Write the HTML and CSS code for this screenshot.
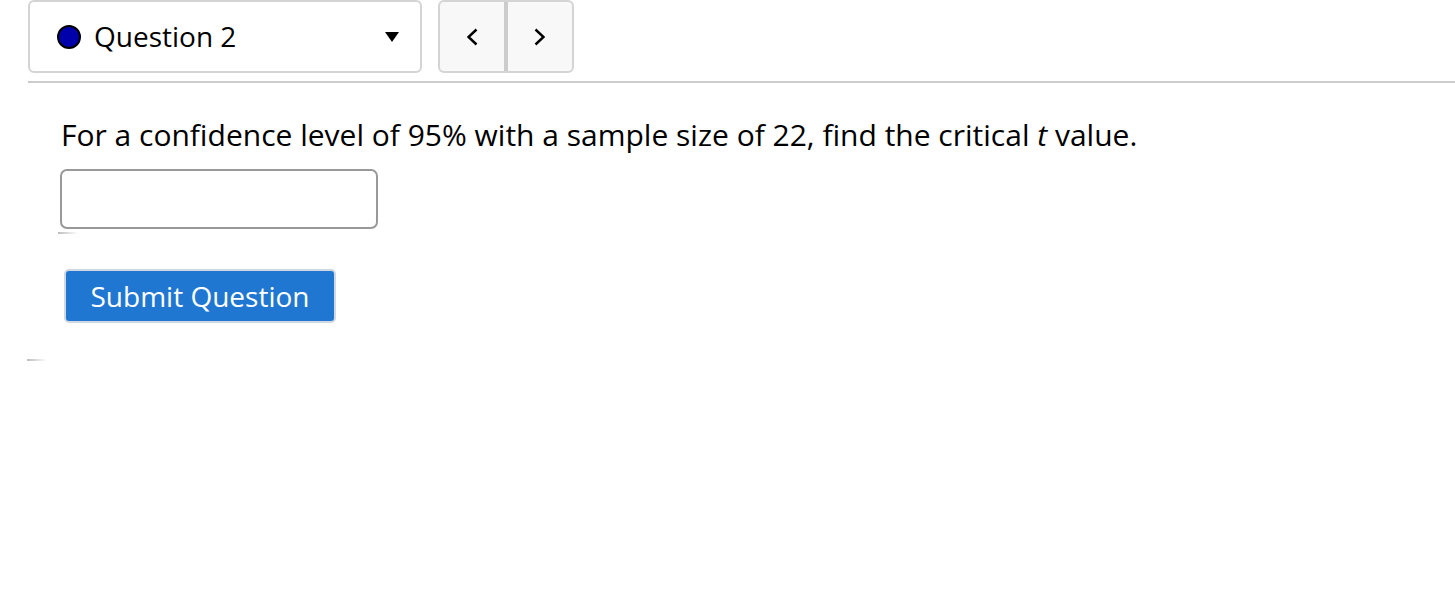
FILE: index.html
```
<!DOCTYPE html>
<html>
  <head>
    <title>Question 2</title>
    <meta charset="UTF-8" />
    <link rel="stylesheet" href="styles.css">
  </head>
  <body>
    <div class="header">
      <div class="picker">
        <span class="dot"></span>
        <span class="picker-label">Question 2</span>
        <span class="caret"></span>
      </div>
      <div class="nav">
        <button class="nav-btn" type="button" aria-label="Previous">
          <svg width="12" height="18" viewBox="0 0 12 18"><polyline points="10.5,1.5 2.5,9 10.5,16.5" fill="none" stroke="#000" stroke-width="2.4" /></svg>
        </button>
        <button class="nav-btn" type="button" aria-label="Next">
          <svg width="12" height="18" viewBox="0 0 12 18"><polyline points="1.5,1.5 9.5,9 1.5,16.5" fill="none" stroke="#000" stroke-width="2.4" /></svg>
        </button>
      </div>
    </div>
    <hr class="rule" />
    <div class="question">
      <p class="prompt">For a confidence level of 95% with a sample size of 22, find the critical <i>t</i> value.</p>
      <input class="answer" type="text" />
      <span class="fade fade-input"></span>
      <button class="submit" type="button">Submit Question</button>
    </div>
    <span class="fade fade-bottom"></span>
  </body>
</html>
```
FILE: styles.css
```
body {
  margin: 0;
  font-family: "Open Sans", "Liberation Sans", sans-serif;
  color: #000;
  background: #fff;
}
.header {
  display: flex;
  gap: 16px;
  padding-left: 28px;
}
.picker {
  display: flex;
  align-items: center;
  width: 394px;
  height: 73px;
  box-sizing: border-box;
  border: 2px solid #d4d4d4;
  border-radius: 6px;
  padding: 0 21px 0 27px;
}
.dot {
  width: 24px;
  height: 24px;
  box-sizing: border-box;
  border: 2px solid #000;
  border-radius: 50%;
  background: #0000aa;
}
.picker-label {
  flex: 1;
  margin: 0 0 2px 13px;
  font-size: 28px;
}
.caret {
  width: 0;
  height: 0;
  border-left: 7px solid transparent;
  border-right: 7px solid transparent;
  border-top: 10px solid #000;
}
.nav {
  display: flex;
  width: 136px;
  height: 73px;
  box-sizing: border-box;
  border: 2px solid #d4d4d4;
  border-radius: 6px;
  background: #f8f8f8;
  overflow: hidden;
}
.nav-btn {
  flex: 1;
  border: 0;
  background: transparent;
  padding: 0;
  display: flex;
  align-items: center;
  justify-content: center;
}
.nav-btn + .nav-btn {
  border-left: 4px solid #cccccc;
}
.rule {
  margin: 8px 0 0 28px;
  border: 0;
  height: 2px;
  background: #cccccc;
}
.question {
  display: flex;
  flex-direction: column;
  align-items: flex-start;
  padding-left: 60px;
}
.prompt {
  margin: 32px 0 0 1px;
  font-size: 30px;
  line-height: 39px;
}
.answer {
  margin-top: 15px;
  width: 318px;
  height: 60px;
  box-sizing: border-box;
  border: 2px solid #999;
  border-radius: 7px;
  font: inherit;
  font-size: 28px;
}
.fade {
  display: block;
  height: 2px;
  width: 20px;
  background: linear-gradient(to right, #bdbdbd, #fff);
}
.fade-input {
  margin: 3px 0 0 -2px;
}
.submit {
  margin: 35px 0 0 4px;
  width: 272px;
  height: 54px;
  border: 2px solid #cfd8e3;
  border-radius: 5px;
  background: #1f77d2;
  color: #fff;
  font: inherit;
  font-size: 28px;
  padding: 0;
}
.fade-bottom {
  margin: 36px 0 0 27px;
}
```
